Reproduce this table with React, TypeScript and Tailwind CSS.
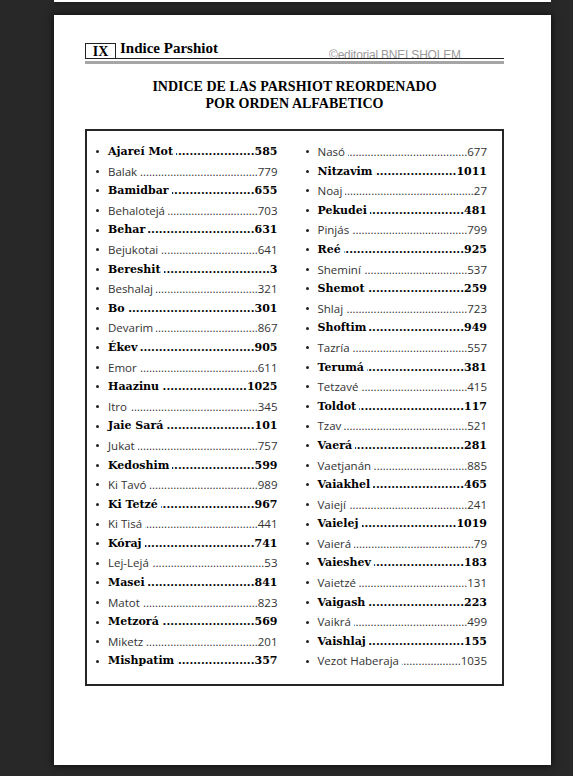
import React from "react";

type Entry = [string, string, boolean];

const left: Entry[] = [
  ["Ajareí Mot", "585", true],
  ["Balak", "779", false],
  ["Bamidbar", "655", true],
  ["Behalotejá", "703", false],
  ["Behar", "631", true],
  ["Bejukotai", "641", false],
  ["Bereshit", "3", true],
  ["Beshalaj", "321", false],
  ["Bo", "301", true],
  ["Devarim", "867", false],
  ["Ékev", "905", true],
  ["Emor", "611", false],
  ["Haazinu", "1025", true],
  ["Itro", "345", false],
  ["Jaie Sará", "101", true],
  ["Jukat", "757", false],
  ["Kedoshim", "599", true],
  ["Ki Tavó", "989", false],
  ["Ki Tetzé", "967", true],
  ["Ki Tisá", "441", false],
  ["Kóraj", "741", true],
  ["Lej-Lejá", "53", false],
  ["Masei", "841", true],
  ["Matot", "823", false],
  ["Metzorá", "569", true],
  ["Miketz", "201", false],
  ["Mishpatim", "357", true],
];

const right: Entry[] = [
  ["Nasó", "677", false],
  ["Nitzavim", "1011", true],
  ["Noaj", "27", false],
  ["Pekudei", "481", true],
  ["Pinjás", "799", false],
  ["Reé", "925", true],
  ["Sheminí", "537", false],
  ["Shemot", "259", true],
  ["Shlaj", "723", false],
  ["Shoftim", "949", true],
  ["Tazría", "557", false],
  ["Terumá", "381", true],
  ["Tetzavé", "415", false],
  ["Toldot", "117", true],
  ["Tzav", "521", false],
  ["Vaerá", "281", true],
  ["Vaetjanán", "885", false],
  ["Vaiakhel", "465", true],
  ["Vaiejí", "241", false],
  ["Vaielej", "1019", true],
  ["Vaierá", "79", false],
  ["Vaieshev", "183", true],
  ["Vaietzé", "131", false],
  ["Vaigash", "223", true],
  ["Vaikrá", "499", false],
  ["Vaishlaj", "155", true],
  ["Vezot Haberaja", "1035", false],
];

const DOTS = ".".repeat(90);

function Row({ e }: { e: Entry }) {
  const [name, num, bold] = e;
  const font = bold
    ? "font-['DejaVu_Serif',serif] font-bold text-[11px] text-black"
    : "font-['Open_Sans',sans-serif] font-normal text-[11.5px] text-[#333]";
  return (
    <div className={`flex items-center h-[19.6px] leading-[19.6px] ${font}`}>
      <div className="w-[12px] shrink-0 flex items-center">
        <div className="w-[3px] h-[3px] rounded-full bg-[#222]" />
      </div>
      <span className="whitespace-nowrap shrink-0">{name}</span>
      <span
        dir="rtl"
        className="flex-1 min-w-0 overflow-hidden whitespace-nowrap ml-[3px]"
      >
        {DOTS}
      </span>
      <span className="whitespace-nowrap shrink-0">{num}</span>
    </div>
  );
}

export default function App() {
  return (
    <div className="min-h-[776px] w-full bg-[#282828] overflow-hidden">
      <div className="ml-[54px] w-[497px] h-[2px] bg-white shadow-[0_0_6px_rgba(0,0,0,0.7)]" />
      <div className="ml-[54px] mt-[13px] w-[497px] h-[750px] bg-white pl-[31px] pr-[47px] pt-[28px] shadow-[0_0_8px_rgba(0,0,0,0.8)]">
        {/* Header */}
        <div className="relative">
          <div className="flex items-end h-[15px]">
            <div className="w-[31px] h-[15px] border-t border-l border-r border-[#222] flex items-center justify-center font-['Liberation_Serif',serif] font-bold text-[14px] leading-none text-black pt-[1px]">
              IX
            </div>
            <div className="ml-[4px] font-['Liberation_Serif',serif] font-bold text-[15px] leading-none text-black pb-[2px]">
              Indice Parshiot
            </div>
          </div>
          <div className="absolute left-[244px] top-0 h-[15px] overflow-hidden">
            <div className="pt-[6px] font-['Liberation_Sans',sans-serif] text-[12px] leading-[12px] text-[#9a9a9a] whitespace-nowrap tracking-[-0.2px]">
              ©editorial BNEI SHOLEM
            </div>
          </div>
          <div className="relative h-[1px] bg-[#222]" />
          <div className="mt-[2px] h-[3px] bg-[#a6a6a6]" />
        </div>

        {/* Title */}
        <div className="mt-[14px] text-center font-['Liberation_Serif',serif] font-bold text-[14px] leading-[17px] text-black">
          <div>INDICE DE LAS PARSHIOT REORDENADO</div>
          <div>POR ORDEN ALFABETICO</div>
        </div>

        {/* Box */}
        <div className="mt-[17px] border-2 border-[#262626] pt-[11px] pb-[13px] pl-[9px] pr-[15px] grid grid-cols-2 gap-x-[28px]">
          <div className="flex flex-col">
            {left.map((e) => (
              <Row key={e[0]} e={e} />
            ))}
          </div>
          <div className="flex flex-col">
            {right.map((e) => (
              <Row key={e[0]} e={e} />
            ))}
          </div>
        </div>
      </div>
    </div>
  );
}
